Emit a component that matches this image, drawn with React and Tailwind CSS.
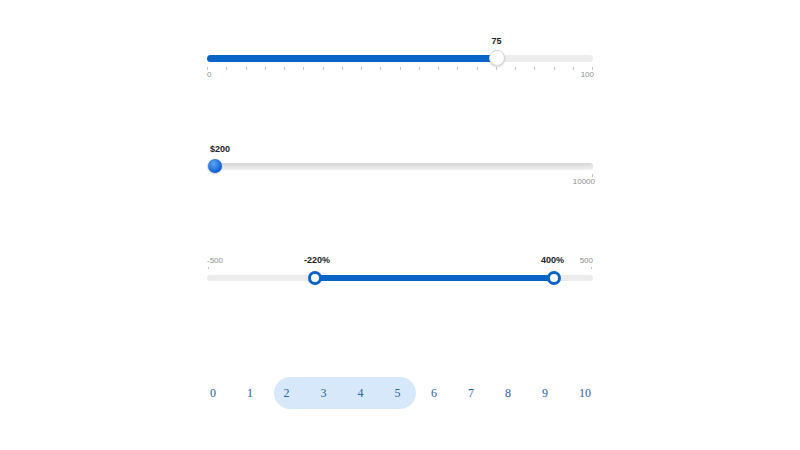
import React from 'react'

const ticks = Array.from({ length: 21 }, (_, i) => i)
const pages = [0, 1, 2, 3, 4, 5, 6, 7, 8, 9, 10]

const Cell = ({ n, className = 'w-[37px]' }) => (
  <span className={`${className} text-center text-[12px] leading-[32px] text-[#2862a6]`}>{n}</span>
)

export default function App() {
  return (
    <div className="w-full h-[450px] bg-white font-['Liberation_Sans',Arial,sans-serif]">
      <div className="w-[386px] mx-auto pt-[35px]">
        {/* single slider with ticks */}
        <div className="relative h-[12px]">
          <span className="absolute left-[75%] -translate-x-1/2 text-[9px] font-bold leading-[12px] text-[#222]">75</span>
        </div>
        <div className="relative mt-[3px] h-[16px] flex items-center">
          <div className="relative w-full h-[7px] rounded-full bg-[#ececec]">
            <div className="absolute left-0 top-0 h-full w-[75%] rounded-full bg-[#0a64c8]" />
          </div>
          <div className="absolute left-[75%] top-0 -translate-x-1/2 w-4 h-4 rounded-full bg-white border border-[#d4d4d4] shadow-[0_1px_2px_rgba(0,0,0,0.15)]" />
        </div>
        <div className="flex justify-between h-[4px] pt-[1px]">
          {ticks.map((t) => (
            <span key={t} className="w-px h-[3px] bg-[#c4c4c4]" />
          ))}
        </div>
        <div className="flex justify-between text-[8px] leading-[10px] text-[#8f8f8f]">
          <span>0</span>
          <span className="mr-[-1px]">100</span>
        </div>

        {/* price slider */}
        <div className="relative mt-[63px] h-[12px]">
          <span className="absolute left-[3px] text-[9px] font-bold leading-[12px] text-[#222]">$200</span>
        </div>
        <div className="relative mt-[3px] h-[16px] flex items-center">
          <div className="w-full h-[7px] rounded-full bg-[linear-gradient(to_bottom,#d6d6d6,#f1f1f1)]" />
          <div className="absolute left-[2%] top-[1px] -translate-x-1/2 w-[14px] h-[14px] rounded-full bg-[radial-gradient(circle_at_40%_35%,#5ea3f2,#0b5fcf_70%)] shadow-[0_1px_2px_rgba(0,0,0,0.2)]" />
        </div>
        <div className="flex justify-end h-[3px]">
          <span className="w-px h-[3px] bg-[#c4c4c4]" />
        </div>
        <div className="flex justify-end text-[8px] leading-[10px] text-[#8f8f8f]">
          <span className="mr-[-2px]">10000</span>
        </div>

        {/* range slider */}
        <div className="relative mt-[68px] h-[12px] flex justify-between text-[8px] leading-[12px] text-[#8f8f8f]">
          <span>-500</span>
          <span>500</span>
          <span className="absolute left-[28.5%] -translate-x-1/2 top-[-1px] text-[9px] font-bold text-[#222]">-220%</span>
          <span className="absolute left-[89.5%] -translate-x-1/2 top-[-1px] text-[9px] font-bold text-[#222]">400%</span>
        </div>
        <div className="flex justify-between h-[3px] px-[1px]">
          <span className="w-px h-[2px] bg-[#c4c4c4]" />
          <span className="w-px h-[2px] bg-[#c4c4c4]" />
        </div>
        <div className="relative h-[16px] flex items-center">
          <div className="relative w-full h-[6px] rounded-full bg-[#ececec]">
            <div className="absolute left-[28%] w-[62%] top-0 h-full bg-[#0a64c8]" />
          </div>
          <div className="absolute left-[28%] top-[1px] -translate-x-1/2 w-[14px] h-[14px] rounded-full bg-white border-[3px] border-[#0a64c8]" />
          <div className="absolute left-[90%] top-[1px] -translate-x-1/2 w-[14px] h-[14px] rounded-full bg-white border-[3px] border-[#0a64c8]" />
        </div>
      </div>

      {/* segmented number picker */}
      <div className="w-[413px] mx-auto mt-[91px] pl-[1px] flex items-center font-['Liberation_Serif','Times_New_Roman',serif]">
        <Cell n={pages[0]} />
        <Cell n={pages[1]} />
        <div className="ml-[5px] h-[32px] flex gap-[13px] pl-[1px] pr-[6px] rounded-full bg-[#d7e8fb]">
          {pages.slice(2, 6).map((p) => (
            <Cell key={p} n={p} className="w-[24px]" />
          ))}
        </div>
        {pages.slice(6, 10).map((p) => (
          <Cell key={p} n={p} />
        ))}
        <Cell n={pages[10]} className="w-[43px]" />
      </div>
    </div>
  )
}
